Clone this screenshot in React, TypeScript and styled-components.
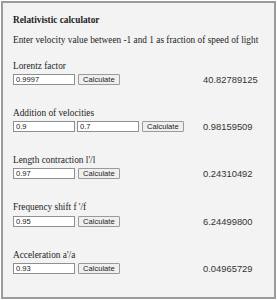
import React from "react";
import styled, { createGlobalStyle } from "styled-components";

const Global = createGlobalStyle`
  html, body { margin: 0; padding: 0; background: #ffffff; }
`;

const Panel = styled.div`
  box-sizing: border-box;
  margin: 1px;
  width: 275px;
  height: 298px;
  border: 2px solid #9b9b9b;
  background: #f3f3f3;
  padding: 12px 10px 0 10px;
  font-family: "Liberation Serif", "Times New Roman", serif;
  font-size: 9.3px;
  color: #1e1e1e;
`;

const Title = styled.div`
  font-weight: bold;
  line-height: 10.3px;
  margin: 0;
`;

const Intro = styled.div`
  line-height: 10.3px;
  margin-top: 10px;
  margin-bottom: 15px;
`;

const Section = styled.div`
  margin-bottom: 23px;
`;

const Label = styled.div`
  line-height: 10.3px;
  margin-bottom: 3px;
`;

const Row = styled.div`
  display: grid;
  grid-template-columns: 190px 1fr;
  align-items: center;
`;

const Controls = styled.div`
  display: flex;
  align-items: center;
  gap: 2px;
`;

const Input = styled.input`
  box-sizing: border-box;
  width: 62px;
  height: 11px;
  padding: 0 2px;
  border: 1px solid #8f8f8f;
  background: #fff;
  font-family: "Liberation Sans", Arial, sans-serif;
  font-size: 7.6px;
  color: #222;
  outline: none;
`;

const Button = styled.button`
  box-sizing: border-box;
  height: 11px;
  padding: 0 4px;
  margin-left: 1px;
  border: 1px solid #9a9a9a;
  border-radius: 1px;
  background: #efefef;
  font-family: "Liberation Sans", Arial, sans-serif;
  font-size: 7.6px;
  line-height: 9px;
  color: #222;
`;

const Result = styled.div`
  font-family: "Liberation Sans", Arial, sans-serif;
  font-size: 9.4px;
  color: #333;
  line-height: 11px;
`;

type Calc = { label: string; values: string[]; result: string };

const calcs: Calc[] = [
  { label: "Lorentz factor", values: ["0.9997"], result: "40.82789125" },
  { label: "Addition of velocities", values: ["0.9", "0.7"], result: "0.98159509" },
  { label: "Length contraction l'/l", values: ["0.97"], result: "0.24310492" },
  { label: "Frequency shift f '/f", values: ["0.95"], result: "6.24499800" },
  { label: "Acceleration a'/a", values: ["0.93"], result: "0.04965729" },
];

export default function App() {
  return (
    <>
      <Global />
      <Panel>
        <Title>Relativistic calculator</Title>
        <Intro>Enter velocity value between -1 and 1 as fraction of speed of light</Intro>
        {calcs.map((c) => (
          <Section key={c.label}>
            <Label>{c.label}</Label>
            <Row>
              <Controls>
                {c.values.map((v, i) => (
                  <Input key={i} defaultValue={v} />
                ))}
                <Button>Calculate</Button>
              </Controls>
              <Result>{c.result}</Result>
            </Row>
          </Section>
        ))}
      </Panel>
    </>
  );
}
